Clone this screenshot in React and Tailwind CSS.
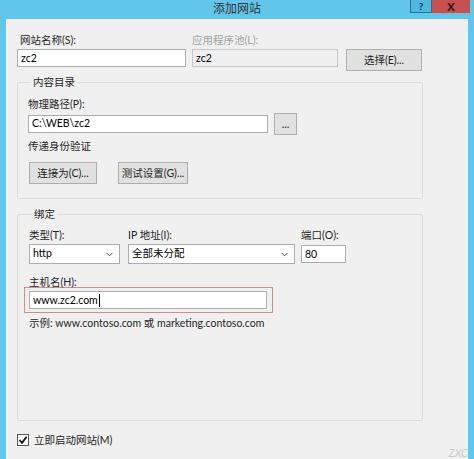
import { ChevronDown } from 'lucide-react'

const font = { fontFamily: '"Segoe UI", Lato, "Noto Sans CJK SC", sans-serif' }

const Field = ({ value, className = '', muted = false, caret = false }) => (
  <div
    className={`h-[18px] border flex items-center pl-[3px] text-[10.5px] leading-none ${
      muted ? 'bg-[#f0f0f0] border-[#c6c6c6]' : 'bg-white border-[#abadb3]'
    } ${className}`}
  >
    {value}
    {caret && <span className="w-px h-[13px] bg-black ml-px" />}
  </div>
)

const Btn = ({ text, className = '' }) => (
  <button
    type="button"
    className={`h-[22px] bg-[#e1e1e1] border border-[#adadad] text-[10.5px] leading-none whitespace-nowrap text-[#1e1e1e] ${className}`}
  >
    {text}
  </button>
)

const Select = ({ value, className = '' }) => (
  <div
    className={`h-[20px] bg-white border border-[#abadb3] flex items-center justify-between pl-[3px] pr-[4px] text-[10.5px] ${className}`}
  >
    <span>{value}</span>
    <ChevronDown size={11} strokeWidth={2} className="text-[#404040]" />
  </div>
)

const Label = ({ children, className = '' }) => (
  <div className={`h-[16px] leading-[16px] text-[10.5px] whitespace-nowrap text-[#1e1e1e] ${className}`}>{children}</div>
)

export default function App() {
  return (
    <div className="w-[474px] h-[459px] bg-[#62c6ec] flex flex-col overflow-hidden" style={font}>
      {/* title bar: caption centred, help + close on the right */}
      <div className="h-[19px] shrink-0 flex items-start pl-[64px] pr-[4px]">
        <div className="flex-1 text-center text-[12px] leading-[17px] text-[#333]">添加网站</div>
        <div className="w-[22px] h-[13px] bg-[#4fb8df] border-x border-b border-[#2a6f91] flex items-center justify-center text-[10px] font-bold leading-none text-[#14243a]">
          ?
        </div>
        <div className="w-[38px] h-[13px] bg-[#c75050] flex items-center justify-center text-[11px] font-bold leading-none text-[#2a1010]">
          X
        </div>
      </div>

      {/* dialog body */}
      <div className="relative flex-1 mx-[6px] bg-[#f0f0f0] pt-[13px] pl-[11px]">
        <div className="flex items-start">
          <div className="w-[169px]">
            <Label className="pl-[3px]">网站名称(S):</Label>
            <Field value="zc2" className="mt-px" />
          </div>
          <div className="w-[146px] ml-[6px]">
            <Label className="text-[#a2a2a2]">应用程序池(L):</Label>
            <Field value="zc2" muted className="mt-px" />
          </div>
          <Btn text="选择(E)..." className="w-[76px] mt-[17px] ml-[8px]" />
        </div>

        <fieldset className="w-[406px] mt-[3px] border border-[#dcdcdc] rounded-[2px] pl-[10px] pb-[14px]">
          <legend className="ml-[3px] px-[2px] text-[10.5px] leading-[16px] text-[#1e1e1e]">内容目录</legend>
          <Label className="mt-[6px]">物理路径(P):</Label>
          <div className="flex items-center">
            <Field value="C:\WEB\zc2" className="w-[240px]" />
            <Btn text="..." className="w-[23px] ml-[6px] mt-[1px]" />
          </div>
          <Label className="mt-[3px]">传递身份验证</Label>
          <div className="flex mt-[8px] ml-px">
            <Btn text="连接为(C)..." className="w-[68px]" />
            <Btn text="测试设置(G)..." className="w-[70px] ml-[21px]" />
          </div>
        </fieldset>

        <fieldset className="w-[406px] h-[215px] mt-[7px] border border-[#dcdcdc] rounded-[2px] pl-[11px]">
          <legend className="ml-[3px] px-[2px] text-[10.5px] leading-[16px] text-[#1e1e1e]">绑定</legend>
          <div className="flex mt-[5px]">
            <div className="w-[91px]">
              <Label>类型(T):</Label>
              <Select value="http" className="mt-px" />
            </div>
            <div className="w-[167px] ml-[8px]">
              <Label>IP 地址(I):</Label>
              <Select value="全部未分配" className="mt-px" />
            </div>
            <div className="w-[45px] ml-[6px]">
              <Label>端口(O):</Label>
              <Field value="80" className="mt-[2px]" />
            </div>
          </div>
          <Label className="mt-[10px]">主机名(H):</Label>
          <div className="w-fit -ml-[5px] -mt-[3px] border border-[#d88a8a] pl-[4px] pr-[5px] py-[3px]">
            <Field value="www.zc2.com" caret className="w-[238px]" />
          </div>
          <Label className="mt-[2px]">示例: www.contoso.com 或 marketing.contoso.com</Label>
        </fieldset>

        <label className="flex items-center mt-[11px] text-[10.5px] leading-[16px] text-[#1e1e1e]">
          <span className="w-[12px] h-[12px] bg-white border border-[#555] flex items-center justify-center">
            <svg width="10" height="10" viewBox="0 0 10 10">
              <path d="M1.5 5.2 L4 7.8 L8.6 1.8" fill="none" stroke="#111" strokeWidth="1.8" />
            </svg>
          </span>
          <span className="ml-[5px]">立即启动网站(M)</span>
        </label>

        <div className="absolute right-0 bottom-[1px] text-[11px] leading-none text-[#c8c8c8] italic">ZXC</div>
      </div>
    </div>
  )
}
